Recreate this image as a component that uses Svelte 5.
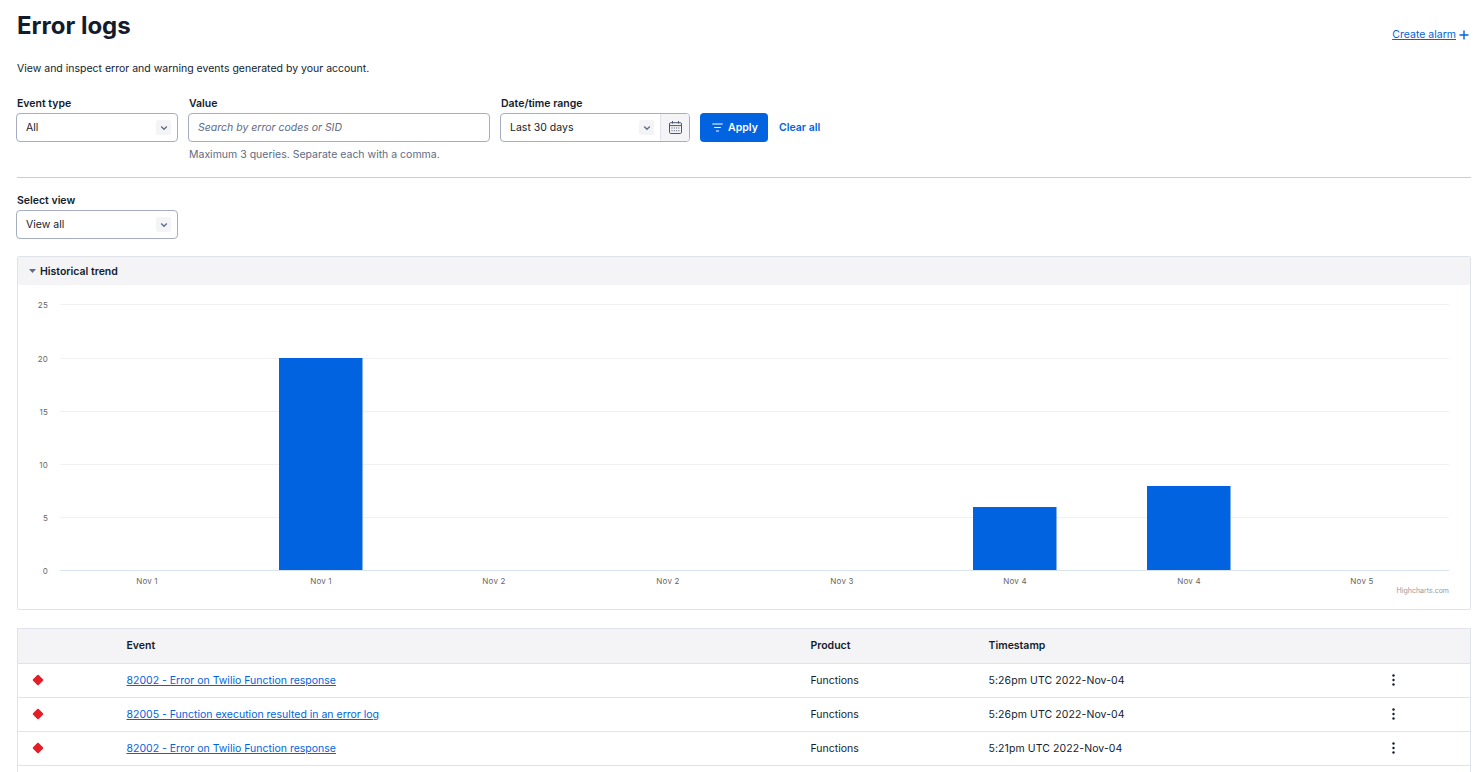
<script>
  const gridY = [304, 358, 411, 464, 517];
  const yLabels = [[25, 304], [20, 358], [15, 411], [10, 464], [5, 517], [0, 570]];
  const xLabels = [[147, 'Nov 1'], [321, 'Nov 1'], [494, 'Nov 2'], [668, 'Nov 2'], [842, 'Nov 3'], [1015, 'Nov 4'], [1189, 'Nov 4'], [1362, 'Nov 5']];
  const bars = [[279, 358], [973, 507], [1147, 486]];
  const chartTop = 285;
  const chartLeft = 18;
  const rows = [
    { event: '82002 - Error on Twilio Function response', time: '5:26pm UTC 2022-Nov-04' },
    { event: '82005 - Function execution resulted in an error log', time: '5:26pm UTC 2022-Nov-04' },
    { event: '82002 - Error on Twilio Function response', time: '5:21pm UTC 2022-Nov-04' }
  ];
</script>

<div class="page">
  <header class="top">
    <h1>Error logs</h1>
    <a class="alarm" href="#alarm"><span>Create alarm</span>
      <svg width="10" height="10" viewBox="0 0 10 10"><path d="M5 .5v9M.5 5h9" stroke="#0263e0" stroke-width="1.4" fill="none"/></svg>
    </a>
  </header>
  <p class="desc">View and inspect error and warning events generated by your account.</p>

  <div class="filters">
    <div class="field f-type">
      <span class="label">Event type</span>
      <div class="control select"><span>All</span><i class="chev"><svg width="8" height="6" viewBox="0 0 8 6"><path d="M1.2 1.5 4 4.3l2.8-2.8" stroke="#606b85" stroke-width="1.3" fill="none"/></svg></i></div>
    </div>
    <div class="field f-value">
      <span class="label">Value</span>
      <div class="control"><span class="ph">Search by error codes or SID</span></div>
      <span class="hint">Maximum 3 queries. Separate each with a comma.</span>
    </div>
    <div class="field f-date">
      <span class="label">Date/time range</span>
      <div class="control date">
        <div class="date-sel"><span>Last 30 days</span><i class="chev"><svg width="8" height="6" viewBox="0 0 8 6"><path d="M1.2 1.5 4 4.3l2.8-2.8" stroke="#606b85" stroke-width="1.3" fill="none"/></svg></i></div>
        <div class="cal">
          <svg width="13" height="13" viewBox="0 0 13 13" fill="none" stroke="#4b5671" stroke-width="1"><rect x=".5" y="1.7" width="12" height="10.8" rx="1.2"/><path d="M.5 4.6h12M3.5 0v2.6M9.5 0v2.6"/><path d="M2.5 7h8M2.5 9.7h8" stroke-dasharray="1 1.3"/></svg>
        </div>
      </div>
    </div>
    <button class="apply">
      <svg width="11" height="9" viewBox="0 0 11 9"><path d="M.3 1h10.4M2.2 4.5h6.6M4 8h3" stroke="#fff" stroke-width="1.2" fill="none"/></svg>
      Apply
    </button>
    <a class="clear" href="#clear">Clear all</a>
  </div>

  <hr />

  <div class="field f-type view">
    <span class="label">Select view</span>
    <div class="control select"><span>View all</span><i class="chev"><svg width="8" height="6" viewBox="0 0 8 6"><path d="M1.2 1.5 4 4.3l2.8-2.8" stroke="#606b85" stroke-width="1.3" fill="none"/></svg></i></div>
  </div>

  <section class="trend">
    <div class="trend-head">
      <svg width="7" height="4" viewBox="0 0 7 4"><path d="M0 0h7L3.5 4z" fill="#606b85"/></svg>
      <span>Historical trend</span>
    </div>
    <svg class="chart" width="1452" height="323" viewBox="{chartLeft} {chartTop} 1452 323">
      {#each gridY as y}
        <line x1="60" x2="1449" y1={y + 0.5} y2={y + 0.5} stroke="#f0f0f3" stroke-width="1" />
      {/each}
      {#each bars as [x, top]}
        <rect x={x} y={top} width="83.5" height={570 - top} fill="#0263e0" />
      {/each}
      <line x1="60" x2="1449" y1="570.5" y2="570.5" stroke="#d9e2ef" stroke-width="1" />
      {#each yLabels as [v, y]}
        <text class="tick" x="48" y={y + 3.5} text-anchor="end">{v}</text>
      {/each}
      {#each xLabels as [x, t]}
        <text class="tick" x={x} y="584" text-anchor="middle">{t}</text>
      {/each}
      <text class="credit" x="1449" y="593" text-anchor="end">Highcharts.com</text>
    </svg>
  </section>

  <table>
    <colgroup><col class="c1" /><col class="c2" /><col class="c3" /><col class="c4" /><col /></colgroup>
    <thead>
      <tr><th></th><th class="hcell">Event</th><th class="hcell">Product</th><th class="hcell">Timestamp</th><th></th></tr>
    </thead>
    <tbody>
      {#each rows as r}
        <tr>
          <td><span class="diamond"></span></td>
          <td><a href="#event">{r.event}</a></td>
          <td>Functions</td>
          <td class="time">{r.time}</td>
          <td class="more">
            <svg width="3" height="12" viewBox="0 0 3 12" fill="#121c2d"><circle cx="1.5" cy="1.5" r="1.2"/><circle cx="1.5" cy="6" r="1.2"/><circle cx="1.5" cy="10.5" r="1.2"/></svg>
          </td>
        </tr>
      {/each}
      <tr><td colspan="5"></td></tr>
    </tbody>
  </table>
</div>

<style>
  :global(html), :global(body) { margin: 0; height: 772px; overflow: hidden; background: #fff; }
  .page {
    box-sizing: border-box;
    width: 1478px;
    padding: 0 7px 0 17px;
    font-family: Inter, "Liberation Sans", sans-serif;
    font-size: 10.5px;
    color: #121c2d;
  }
  .top { display: flex; justify-content: space-between; align-items: flex-start; height: 60px; }
  h1 { margin: 11px 0 0; font-size: 24px; line-height: 30px; font-weight: 700; }
  .alarm { display: flex; align-items: center; gap: 3px; margin: 28px 2px 0 0; color: #0263e0; font-size: 10.5px; line-height: 14px; }
  .alarm span { text-decoration: underline; }
  .desc { margin: 0; font-size: 10.5px; line-height: 17px; height: 36px; }
  .filters { display: flex; align-items: flex-start; }
  .field { display: flex; flex-direction: column; }
  .label { font-weight: 600; font-size: 10.5px; line-height: 16px; height: 17px; }
  .control {
    box-sizing: border-box;
    height: 29px;
    border: 1px solid #a6adc0;
    border-radius: 4px;
    display: flex;
    align-items: center;
    padding: 0 9px;
    background: #fff;
  }
  .f-type { width: 162px; margin-left: -1px; }
  .f-type .label { padding-left: 1px; }
  .select { justify-content: space-between; padding-right: 6px; }
  .chev { width: 15px; height: 15px; border-radius: 3px; background: #f4f4f6; display: flex; align-items: center; justify-content: center; }
  .f-value { width: 302px; margin-left: 10px; }
  .f-value .label { padding-left: 1px; }
  .ph { font-style: italic; color: #606b85; }
  .hint { color: #606b85; margin-top: 6px; line-height: 14px; padding-left: 1px; }
  .f-date { width: 190px; margin-left: 10px; }
  .f-date .label { padding-left: 1px; }
  .date { padding: 0; overflow: hidden; }
  .date-sel { flex: 1; display: flex; align-items: center; justify-content: space-between; padding: 0 6px 0 9px; }
  .cal { width: 28px; height: 100%; background: #f4f4f6; border-left: 1px solid #e1e3ea; display: flex; align-items: center; justify-content: center; }
  .apply {
    box-sizing: border-box;
    width: 68px;
    height: 29px;
    margin: 17px 0 0 10px;
    padding: 0 0 0 2px;
    border: 0;
    border-radius: 4px;
    background: #0263e0;
    color: #fff;
    font: 600 10.5px Inter, "Liberation Sans", sans-serif;
    display: flex;
    align-items: center;
    justify-content: center;
    gap: 5px;
  }
  .clear { margin: 17px 0 0 11px; line-height: 29px; font-weight: 600; color: #0263e0; text-decoration: none; }
  hr { margin: 15px 0 0; border: 0; border-top: 1px solid #cacdd8; height: 0; }
  .view { margin-top: 15px; }
  .trend {
    box-sizing: border-box;
    margin-top: 17px;
    height: 354px;
    width: 1454px;
    border: 1px solid #e1e3ea;
    border-radius: 2px;
  }
  .trend-head {
    height: 28px;
    background: #f4f4f6;
    display: flex;
    align-items: center;
    gap: 4px;
    padding-left: 11px;
    font-weight: 600;
    box-sizing: border-box;
  }
  .chart { display: block; }
  .tick { font-size: 8px; fill: #666; letter-spacing: 0.2px; }
  .credit { font-size: 7px; fill: #999; }
  table {
    margin-top: 18px;
    width: 1454px;
    border-collapse: collapse;
    table-layout: fixed;
    border-left: 1px solid #e1e3ea;
    border-right: 1px solid #e1e3ea;
  }
  col.c1 { width: 109px; }
  col.c2 { width: 684px; }
  col.c3 { width: 178px; }
  col.c4 { width: 390px; }
  th, td { border: 1px solid #e1e3ea; border-width: 1px 0; padding: 0; text-align: left; vertical-align: middle; }
  th { height: 34px; background: #f4f4f6; font-weight: 600; }
  .hcell { padding-bottom: 2px; box-sizing: border-box; }
  td { height: 33px; }
  .time { letter-spacing: 0.09px; }
  .diamond { display: block; width: 8px; height: 8px; margin: -2px 0 0 16px; background: #e31e26; border-radius: 1px; transform: rotate(45deg); }
  td a { color: #0263e0; text-decoration: underline; }
  .more svg { display: block; margin: -2px 0 0 13px; }
</style>
